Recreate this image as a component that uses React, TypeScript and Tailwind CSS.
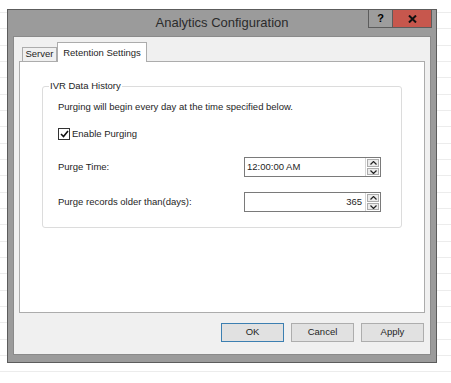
import React from 'react';

const rows = Array.from({ length: 23 });

function Spinner() {
  return (
    <div className="flex flex-col w-[15px] h-full border-l border-[#d5d5d5] bg-white p-[1px] gap-[1px]">
      <div className="flex-1 flex items-center justify-center border border-[#acacac] bg-[#ececec]">
        <svg width="7" height="4" viewBox="0 0 7 4">
          <path d="M0.5 3.5 L3.5 0.5 L6.5 3.5" fill="none" stroke="#222" strokeWidth="1.2" />
        </svg>
      </div>
      <div className="flex-1 flex items-center justify-center border border-[#acacac] bg-[#ececec]">
        <svg width="7" height="4" viewBox="0 0 7 4">
          <path d="M0.5 0.5 L3.5 3.5 L6.5 0.5" fill="none" stroke="#222" strokeWidth="1.2" />
        </svg>
      </div>
    </div>
  );
}

function SpinInput({ value, alignRight }: { value: string; alignRight?: boolean }) {
  return (
    <div className="flex w-[137px] h-[20px] border border-[#7a7a7a] bg-white">
      <div className={`flex-1 flex items-center px-[2px] ${alignRight ? 'justify-end pr-[3px]' : ''}`}>
        {value}
      </div>
      <Spinner />
    </div>
  );
}

export default function App() {
  return (
    <div className="relative w-[451px] h-[383px] bg-white overflow-hidden font-['Liberation_Sans',Arial,sans-serif] text-[9.5px] text-[#1e1e1e]">
      {/* background list behind the dialog */}
      <div className="pt-[12px]">
        {rows.map((_, i) => (
          <div key={i} className="h-[16.33px] border-t border-[#ececec]" />
        ))}
      </div>

      {/* dialog window */}
      <div className="absolute left-[7px] top-[9px] w-[430px] h-[354px] border border-[#5c5c5c] bg-[#9b9b9b] flex flex-col">
        <div className="relative h-[26px] flex items-center justify-center">
          <span className="text-[13px] text-[#2b2b2b]">Analytics Configuration</span>
          <div className="absolute -top-[1px] right-[4px] flex">
            <div className="w-[25px] h-[19px] flex items-center justify-center border border-[#5c5c5c] bg-[#9d9d9d] text-[11px] font-bold text-black">
              ?
            </div>
            <div className="w-[39px] h-[19px] flex items-center justify-center border border-l-0 border-[#5c5c5c] bg-[#c7574d]">
              <svg width="9" height="8" viewBox="0 0 9 8">
                <path d="M1 0.5 L8 7.5 M8 0.5 L1 7.5" stroke="#111" strokeWidth="2" />
              </svg>
            </div>
          </div>
        </div>

        <div className="mx-[5px] h-[319px] bg-[#f0f0f0] border border-[#8a8a8a] flex flex-col">
          {/* tab strip */}
          <div className="flex items-end h-[24px] pl-[8px]">
            <div className="h-[14px] w-[35px] flex items-center justify-center border border-b-0 border-[#acacac] bg-[#f0f0f0]">
              Server
            </div>
            <div className="relative z-10 -mb-[1px] h-[20px] w-[90px] flex items-start justify-center pt-[3px] border border-b-0 border-[#acacac] bg-white">
              Retention Settings
            </div>
          </div>

          {/* tab page */}
          <div className="mx-[5px] h-[252px] border border-[#acacac] bg-white pt-[17px] px-[22px]">
            <fieldset className="border border-[#dcdcdc] rounded-[3px] h-[149px] pl-[15px] pr-[20px] pb-[12px]">
              <legend className="px-[1px] -ml-[9px]">IVR Data History</legend>
              <div className="mt-[8px] h-[12px] flex items-center">
                Purging will begin every day at the time specified below.
              </div>
              <div className="mt-[15px] h-[12px] flex items-center gap-[2px]">
                <div className="w-[12px] h-[12px] border border-[#333] bg-white flex items-center justify-center">
                  <svg width="9" height="8" viewBox="0 0 9 8">
                    <path d="M1 4 L3.5 6.5 L8 1" fill="none" stroke="#111" strokeWidth="1.6" />
                  </svg>
                </div>
                <span>Enable Purging</span>
              </div>
              <div className="mt-[17px] flex items-center justify-between">
                <span>Purge Time:</span>
                <SpinInput value="12:00:00 AM" />
              </div>
              <div className="mt-[15px] flex items-center justify-between">
                <span>Purge records older than(days):</span>
                <SpinInput value="365" alignRight />
              </div>
            </fieldset>
          </div>

          {/* buttons */}
          <div className="mt-[10px] flex justify-end gap-[7px] pr-[6px]">
            <button className="w-[63px] h-[19px] border border-[#3c7fb1] bg-[#e1e1e1]">OK</button>
            <button className="w-[63px] h-[19px] border border-[#adadad] bg-[#e1e1e1]">Cancel</button>
            <button className="w-[63px] h-[19px] border border-[#adadad] bg-[#e1e1e1]">Apply</button>
          </div>
        </div>
      </div>
    </div>
  );
}
